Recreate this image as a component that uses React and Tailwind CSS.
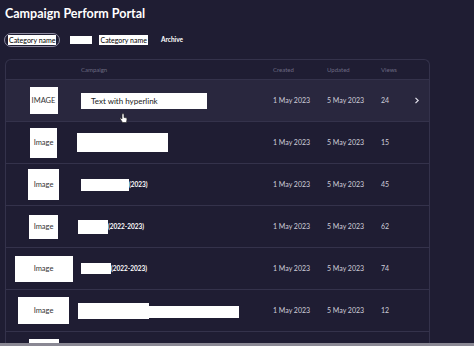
import React from "react";

const rows = [
  { img: "IMAGE", imgW: "w-[28px]", imgH: "h-[27px]", hover: true, views: "24", kind: "link" },
  { img: "Image", imgW: "w-[27px]", imgH: "h-[30px]", views: "15", kind: "box", boxW: "w-[91px]", boxH: "h-[19px]", ml: "-ml-[4px]" },
  { img: "Image", imgW: "w-[31px]", imgH: "h-[31px]", views: "45", kind: "year", boxW: "w-[48px]", boxH: "h-[12px]", ml: "ml-0", suffix: "(2023)" },
  { img: "Image", imgW: "w-[29px]", imgH: "h-[24px]", views: "62", kind: "year", boxW: "w-[30px]", boxH: "h-[14px]", ml: "-ml-[3px]", suffix: "(2022-2023)" },
  { img: "Image", imgW: "w-[58px]", imgH: "h-[26px]", views: "74", kind: "year", boxW: "w-[30px]", boxH: "h-[11px]", ml: "ml-0", suffix: "(2022-2023)" },
  { img: "Image", imgW: "w-[51px]", imgH: "h-[27px]", views: "12", kind: "wide" },
];

function Row({ r }) {
  return (
    <div
      className={`grid grid-cols-[75px_192px_54px_54px_33px_1fr] items-center h-[42px] border-t border-[#34324b] ${
        r.hover ? "bg-[#29273e]" : ""
      }`}
    >
      <div className="flex justify-center">
        <div className={`${r.imgW} ${r.imgH} bg-white flex items-center justify-center text-[7.5px] text-[#333]`}>
          {r.img}
        </div>
      </div>
      <div className="flex items-center">
        {r.kind === "link" && (
          <div className="w-[126px] h-[16px] bg-white flex items-center pl-[10px] text-[8px] text-[#222]">
            Text with hyperlink
          </div>
        )}
        {r.kind === "box" && <div className={`${r.boxW} ${r.boxH} ${r.ml} bg-white`} />}
        {r.kind === "year" && (
          <div className={`flex items-center ${r.ml}`}>
            <div className={`${r.boxW} ${r.boxH} bg-white`} />
            <span className="text-[6.5px] font-bold text-white">{r.suffix}</span>
          </div>
        )}
        {r.kind === "wide" && (
          <div className="flex items-center -ml-[3px]">
            <div className="w-[71px] h-[16px] bg-white" />
            <div className="w-[98px] h-[12px] bg-white -ml-[8px] mt-[2px]" />
          </div>
        )}
      </div>
      <div className="text-[7px] text-[#cfcdda]">1 May 2023</div>
      <div className="text-[7px] text-[#cfcdda]">5 May 2023</div>
      <div className="text-[7px] text-[#cfcdda]">{r.views}</div>
      <div className="text-[#d6d4e0]">
        {r.hover && (
          <svg width="6" height="7" viewBox="0 0 6 7" fill="none">
            <path d="M1.5 0.8 L4.2 3.5 L1.5 6.2" stroke="#e2e0ea" strokeWidth="1.2" />
          </svg>
        )}
      </div>
    </div>
  );
}

export default function App() {
  return (
    <div
      className="relative w-[474px] h-[346px] overflow-hidden bg-[#1f1d33] text-white"
      style={{ fontFamily: "Lato, 'Noto Sans', sans-serif" }}
    >
      <div className="pl-[5px] pt-[5px]">
        <h1 className="text-[12.5px] font-bold leading-[18px] text-white">Campaign Perform Portal</h1>
        <div className="flex items-center mt-[9px] h-[16px]">
          <div className="rounded-full border border-[#8c8aa0] px-[3px] h-[14px] flex items-center -ml-[1px]">
            <span className="bg-white text-black text-[7px] leading-[10px] px-[1px]">Category name</span>
          </div>
          <div className="ml-[10px] w-[22px] h-[8px] bg-white" />
          <div className="ml-[7px] bg-white text-black text-[7px] leading-[10px] px-[1px]">Category name</div>
          <div className="ml-[13px] text-[6.5px] font-bold text-white">Archive</div>
        </div>
      </div>
      <div className="ml-[5px] mt-[11px] w-[425px] rounded-t-[6px] border border-b-0 border-[#34324b]">
        <div className="grid grid-cols-[75px_192px_54px_54px_33px_1fr] items-center h-[19px] text-[6px] text-[#6c6a82]">
          <div />
          <div>Campaign</div>
          <div>Created</div>
          <div>Updated</div>
          <div>Views</div>
          <div />
        </div>
        {rows.map((r, i) => (
          <Row key={i} r={r} />
        ))}
        <div className="grid grid-cols-[75px_1fr] border-t border-[#34324b] h-[20px]">
          <div className="flex justify-center pt-[7px]">
            <div className="w-[30px] h-[14px] bg-white" />
          </div>
        </div>
      </div>
      <svg className="absolute left-[119px] top-[113px]" width="9" height="11" viewBox="0 0 9 11">
        <path
          d="M3 1 L3 6 L2 5 Q1 4.5 1.2 5.8 L3.5 9.5 L7.5 9.5 L8 6 Q8 4.8 7 4.8 L5 4.5 L5 1 Q4 0.2 3 1 Z"
          fill="#ffffff"
          stroke="#222"
          strokeWidth="0.6"
        />
      </svg>
      <div className="absolute left-0 right-0 bottom-0 h-[3px] bg-[#8a8894]" />
    </div>
  );
}
